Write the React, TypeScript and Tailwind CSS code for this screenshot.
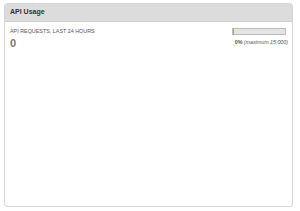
export default function App() {
  return (
    <div className="w-[300px] h-[211px] bg-white pt-[3px] pl-[4px]" style={{ fontFamily: '"Liberation Sans", Arial, sans-serif' }}>
      <div className="w-[289px] h-[204px] border border-[#d6d6d6] rounded-[3px] overflow-hidden bg-white flex flex-col">
        <div className="h-[18px] bg-[#dcdcdc] border-b border-[#d0d0d0] flex items-center pl-[5px]">
          <span className="text-[7px] font-bold text-[#333]">API Usage</span>
        </div>
        <div className="flex justify-between pl-[5px] pr-[4px] pt-[5px]">
          <div className="flex flex-col">
            <span className="text-[5.4px] text-[#555] leading-[8px]">API REQUESTS, LAST 24 HOURS</span>
            <span className="text-[11px] font-bold text-[#777] leading-[13px] mt-[2px]">0</span>
          </div>
          <div className="flex flex-col items-end">
            <div className="w-[54px] h-[7px] mr-[2px] mt-[1px] border border-[#bbb] bg-[#e4e4e4] flex">
              <div className="w-[1px] h-full bg-[#8cc63f]" />
            </div>
            <span className="text-[5.3px] text-[#555] mt-[4px]"><b className="font-bold">0%</b> <i>(maximum 15,000)</i></span>
          </div>
        </div>
      </div>
    </div>
  );
}
